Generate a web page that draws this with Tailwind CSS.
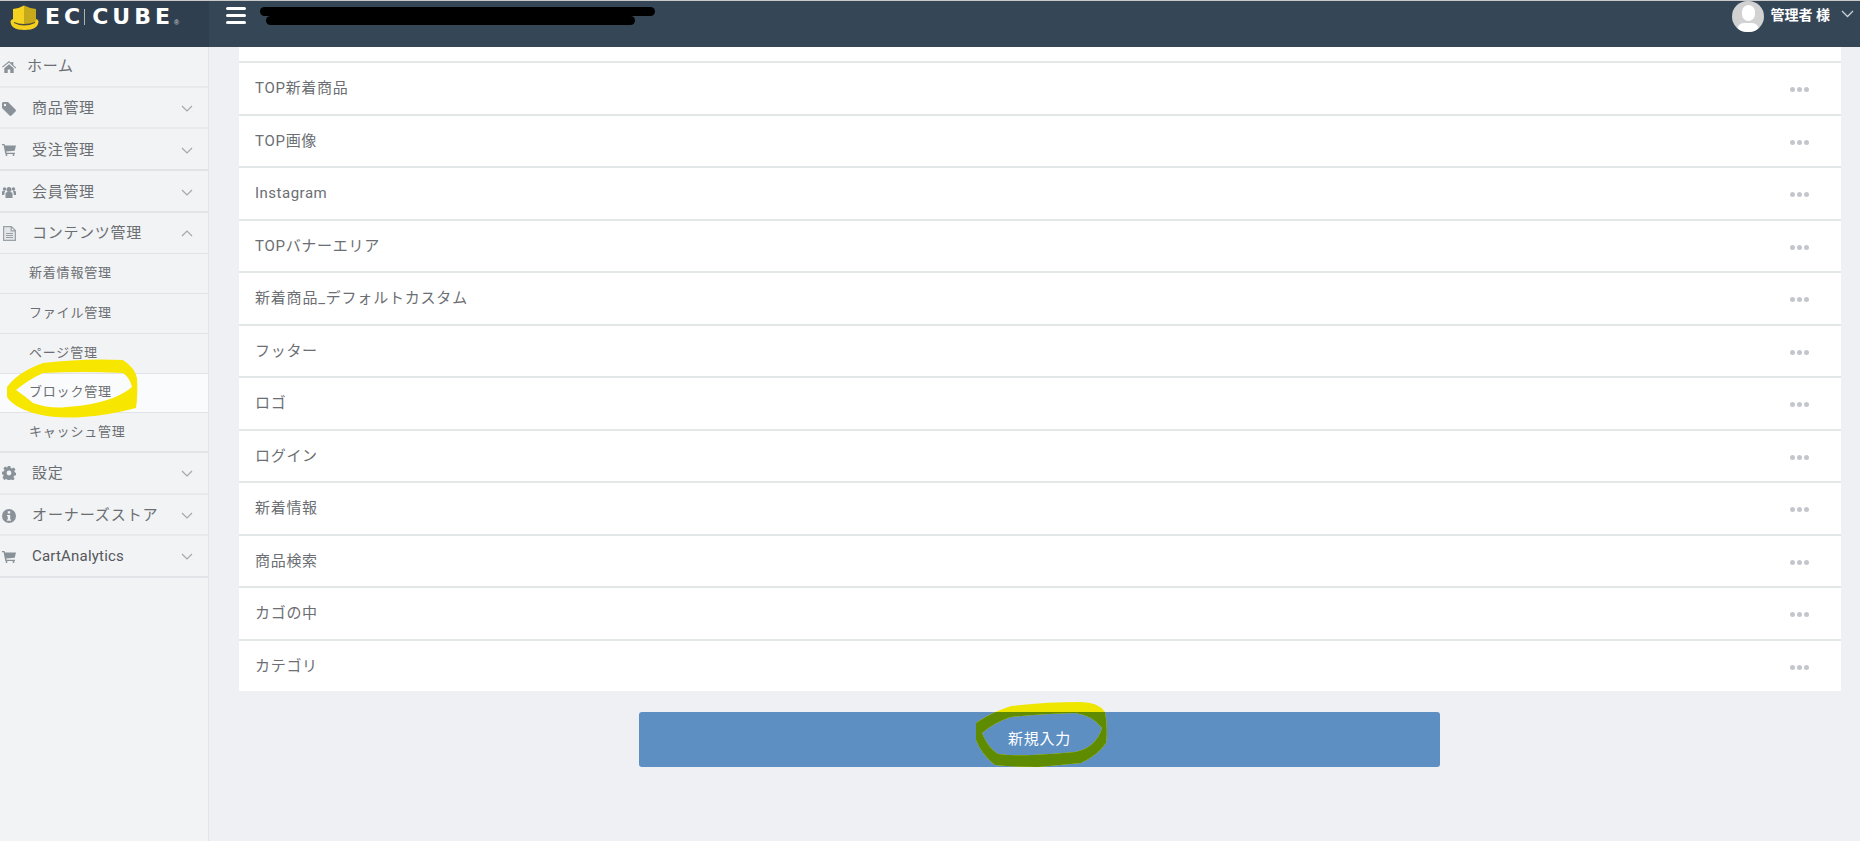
<!DOCTYPE html>
<html>

<head>
    <meta charset="UTF-8">
    <title>EC-CUBE ブロック管理</title>
    <script src="https://cdn.jsdelivr.net/npm/@tailwindcss/browser@4"></script>
</head>

<body class="relative h-[841px] w-[1860px] overflow-hidden bg-[#eef0f4] font-['Roboto','Noto_Sans_CJK_JP',sans-serif] text-[#6b6e72]">
    <!-- Header -->
    <header class="flex h-[47px] border-t border-[#c9c9c9] bg-[#354657]">
        <div class="flex w-[209px] items-start bg-[#2f3f4f] pl-[10px] pt-[3px]">
            <svg width="30" height="27" viewBox="0 0 30 27">
                <path d="M4 16Q14 21 25 16V21Q14 25 4 21Z" fill="#4e4a35" />
                <path d="M.5 17Q2 14.500 4 15V19Q14 24 25 19V15Q27.500 14.500 28.500 17Q28.500 26 14.500 26Q.5 26 .5 17Z" fill="#f4cf1d" />
                <path d="M3 5Q9 4.500 14 1.500V20Q8 20 4 18Q3 17 3 14Z" fill="#f5d21f" />
                <path d="M14 1.500Q20 4.500 26 5V14Q26 17 25 18Q20 20 14 20Z" fill="#c7aa1b" />
            </svg>
            <div class="ml-[5px] mt-[1px] flex items-center font-['DejaVu_Sans'] text-[22px] font-bold leading-[24px] tracking-[4px] text-white">
                <span>EC</span><span class="mr-[7px] h-[16px] w-px bg-white/60"></span><span>CUBE</span><span class="mt-[11px] font-['Liberation_Sans'] text-[7px] leading-none tracking-normal text-[#b8c0c8]">®</span>
            </div>
        </div>
        <div class="relative flex flex-1 items-start pl-[17px] pt-[6px]">
            <div class="flex h-[17px] w-[20px] flex-col justify-between">
                <span class="h-[3px] rounded-sm bg-white"></span>
                <span class="h-[3px] rounded-sm bg-white"></span>
                <span class="h-[3px] rounded-sm bg-white"></span>
            </div>
            <div class="ml-[14px] flex flex-col items-start">
                <span class="h-[9px] w-[395px] rounded-full bg-black"></span>
                <span class="ml-[6px] h-[9px] w-[369px] rounded-full bg-black"></span>
            </div>
            <div class="ml-auto flex items-start">
                <div class="relative -mt-[6px] h-[31px] w-[32px] overflow-hidden rounded-full bg-[#d2d2d2]">
                    <span class="absolute left-[10px] top-[4px] h-[16px] w-[13px] rounded-full bg-white"></span>
                    <span class="absolute left-[5px] top-[22px] h-[14px] w-[22px] rounded-full bg-white"></span>
                </div>
                <span class="ml-[7px] text-[14px] font-bold leading-[16px] text-white">管理者 様</span>
                <svg class="ml-[11px] mr-[6px] mt-[3px]" width="13" height="8" viewBox="0 0 13 8" fill="none" stroke="#c9d0d6" stroke-width="1.3">
                    <path d="M1 1l5.5 5.5L12 1" />
                </svg>
            </div>
        </div>
    </header>

    <div class="flex h-[794px]">
        <!-- Sidebar -->
        <nav class="w-[209px] border-r border-[#e2e4e8] bg-[#f2f3f5] text-[15px] tracking-[0.7px]">
            <a class="flex h-[41px] items-center border-b-2 border-[#e8e9eb] pl-[2px]">
                <svg class="w-[14px] fill-[#8a9299]" height="12" viewBox="0 0 14 12"><path d="M7 0l2.300 2V1h2v3l3 2.800-.8.800L7 1.600.8 6.600 0 5.800zM2.300 7.200L7 3.300l4.700 3.900V12H8.300V8.500H5.700V12H2.300z" /></svg>
                <span class="ml-[11px]">ホーム</span>
            </a>
            <a class="flex h-[41px] items-center border-b-2 border-[#e8e9eb] pl-[2px] pt-[2px]">
                <svg class="w-[14px] fill-[#8a9299]" height="14" viewBox="0 0 14 14"><path d="M0 1.500C0 .7.700 0 1.500 0H6l7.500 7.500c.6.600.6 1.400 0 2L9.500 13.500c-.6.600-1.400.6-2 0L0 6zM3 4.200a1.200 1.200 0 1 0 0-2.400 1.200 1.200 0 0 0 0 2.400z" /></svg>
                <span class="ml-[16px] flex-1">商品管理</span>
                <svg class="mr-[15px]" width="12" height="7" viewBox="0 0 12 7" fill="none" stroke="#a3a8ad" stroke-width="1.200"><path d="M1 1l5 5 5-5" /></svg>
            </a>
            <a class="flex h-[42px] items-center border-b-2 border-[#e2e3e6] pl-[2px] pt-[2px]">
                <svg class="w-[14px] fill-[#8a9299]" height="12" viewBox="0 0 14 12"><path d="M0 0h2.500l.4 1.500H14l-1.300 5.300-8.500.8.300 1.200H13v1.200H3.300L1.600 1.200H0z" /><circle cx="4.500" cy="11" r="1" /><circle cx="11.500" cy="11" r="1" /></svg>
                <span class="ml-[16px] flex-1">受注管理</span>
                <svg class="mr-[15px]" width="12" height="7" viewBox="0 0 12 7" fill="none" stroke="#a3a8ad" stroke-width="1.200"><path d="M1 1l5 5 5-5" /></svg>
            </a>
            <a class="flex h-[42px] items-center border-b-2 border-[#e2e3e6] pl-[2px] pt-[2px]">
                <svg class="w-[14px] fill-[#8a9299]" height="12" viewBox="0 0 14 12"><circle cx="7" cy="3.500" r="2.500" /><circle cx="2.500" cy="3" r="1.700" /><circle cx="11.500" cy="3" r="1.700" /><path d="M3.500 7.500c0-1 1-1.500 3.500-1.500s3.500.5 3.500 1.500V12h-7zM0 6c0-.8.800-1.200 2.500-1.200l.5.100-.7 2.600V9H0zM14 6c0-.8-.8-1.200-2.500-1.200l-.5.100.7 2.600V9H14z" /></svg>
                <span class="ml-[16px] flex-1">会員管理</span>
                <svg class="mr-[15px]" width="12" height="7" viewBox="0 0 12 7" fill="none" stroke="#a3a8ad" stroke-width="1.200"><path d="M1 1l5 5 5-5" /></svg>
            </a>
            <a class="flex h-[41px] items-center border-b border-[#e2e3e6] pl-[3px]">
                <svg class="w-[13px]" height="15" viewBox="0 0 13 15" fill="#e4e6e9" stroke="#9aa1a7" stroke-width="1.200"><path d="M.6.600h7.800l4 4v9.800H.6zM8.200.6v4.200h4.200M3 7.500h7M3 9.500h7M3 11.500h7" /></svg>
                <span class="ml-[16px] flex-1">コンテンツ管理</span>
                <svg class="mr-[15px]" width="12" height="7" viewBox="0 0 12 7" fill="none" stroke="#a3a8ad" stroke-width="1.200"><path d="M1 6l5-5 5 5" /></svg>
            </a>
            <div class="text-[13px] tracking-[0.8px]">
                <a class="flex h-[40px] items-center border-b border-[#e2e3e6] pb-[2px] pl-[29px]">新着情報管理</a>
                <a class="flex h-[40px] items-center border-b border-[#e2e3e6] pb-[2px] pl-[29px]">ファイル管理</a>
                <a class="flex h-[40px] items-center border-b border-[#e2e3e6] pb-[2px] pl-[29px]">ページ管理</a>
                <a class="flex h-[39px] items-center border-b border-[#e2e3e6] bg-[#fafbfc] pb-[2px] pl-[29px]">ブロック管理</a>
                <a class="flex h-[40px] items-center border-b-2 border-[#e2e3e6] pl-[29px]">キャッシュ管理</a>
            </div>
            <a class="flex h-[42px] items-center border-b-2 border-[#e8e9eb] pl-[2px]">
                <svg class="w-[14px] fill-[#8a9299]" height="14" viewBox="0 0 14 14"><path fill-rule="evenodd" d="M5.700 0h2.600l.4 2 1.300.6L11.800 1.500l1.700 1.900-1.200 1.600.6 1.400 1.100.3v2.600l-1.900.4-.6 1.300 1.100 1.700-1.800 1.800-1.700-1.100-1.300.5-.4 1.500H5.700l-.4-1.900-1.300-.5-1.700 1.100L.5 11.500l1.100-1.700L1 8.500 0 8.300V5.700l1.900-.4.6-1.300L1.400 2.300 3.200.5 4.900 1.600l.5-.2zM7 4.600a2.400 2.400 0 1 0 0 4.800 2.400 2.400 0 0 0 0-4.800z" /></svg>
                <span class="ml-[16px] flex-1">設定</span>
                <svg class="mr-[15px]" width="12" height="7" viewBox="0 0 12 7" fill="none" stroke="#a3a8ad" stroke-width="1.200"><path d="M1 1l5 5 5-5" /></svg>
            </a>
            <a class="flex h-[41px] items-center border-b-2 border-[#e8e9eb] pl-[2px] pt-[2px]">
                <svg class="w-[14px] fill-[#8a9299]" height="14" viewBox="0 0 14 14"><path fill-rule="evenodd" d="M7 0a7 7 0 1 1 0 14A7 7 0 0 1 7 0zM5.800 2.300v2.200h2.400V2.300zM5 6v1.200h.8v3.300H5v1.200h4v-1.200h-.8V6z" /></svg>
                <span class="ml-[16px] flex-1 tracking-[0.9px]">オーナーズストア</span>
                <svg class="mr-[15px]" width="12" height="7" viewBox="0 0 12 7" fill="none" stroke="#a3a8ad" stroke-width="1.200"><path d="M1 1l5 5 5-5" /></svg>
            </a>
            <a class="flex h-[42px] items-center border-b-2 border-[#e2e3e6] pl-[2px] pt-[1px]">
                <svg class="w-[14px] fill-[#8a9299]" height="12" viewBox="0 0 14 12"><path d="M0 0h2.500l.4 1.500H14l-1.300 5.300-8.500.8.300 1.200H13v1.200H3.300L1.600 1.200H0z" /><circle cx="4.500" cy="11" r="1" /><circle cx="11.500" cy="11" r="1" /></svg>
                <span class="ml-[16px] flex-1 tracking-[0.2px] text-[#54575b]">CartAnalytics</span>
                <svg class="mr-[15px]" width="12" height="7" viewBox="0 0 12 7" fill="none" stroke="#a3a8ad" stroke-width="1.200"><path d="M1 1l5 5 5-5" /></svg>
            </a>
        </nav>

        <!-- Block list -->
        <main class="flex-1 pl-[30px] pr-[19px]">
            <ul class="border-t-[14px] border-white bg-white text-[15px] tracking-[0.7px]">
                <li class="flex h-[52.5px] items-center justify-between border-t-2 border-[#e3e7e8] pl-[16px] pr-[32px]"><span>TOP新着商品</span><span class="mt-[3px] flex gap-[2px]"><i class="h-[5px] w-[5px] rounded-full bg-[#c3c7cd]"></i><i class="h-[5px] w-[5px] rounded-full bg-[#c3c7cd]"></i><i class="h-[5px] w-[5px] rounded-full bg-[#c3c7cd]"></i></span></li>
                <li class="flex h-[52.5px] items-center justify-between border-t-2 border-[#e3e7e8] pl-[16px] pr-[32px]"><span>TOP画像</span><span class="mt-[3px] flex gap-[2px]"><i class="h-[5px] w-[5px] rounded-full bg-[#c3c7cd]"></i><i class="h-[5px] w-[5px] rounded-full bg-[#c3c7cd]"></i><i class="h-[5px] w-[5px] rounded-full bg-[#c3c7cd]"></i></span></li>
                <li class="flex h-[52.5px] items-center justify-between border-t-2 border-[#e3e7e8] pl-[16px] pr-[32px]"><span class="tracking-[0.5px]">Instagram</span><span class="mt-[3px] flex gap-[2px]"><i class="h-[5px] w-[5px] rounded-full bg-[#c3c7cd]"></i><i class="h-[5px] w-[5px] rounded-full bg-[#c3c7cd]"></i><i class="h-[5px] w-[5px] rounded-full bg-[#c3c7cd]"></i></span></li>
                <li class="flex h-[52.5px] items-center justify-between border-t-2 border-[#e3e7e8] pl-[16px] pr-[32px]"><span>TOPバナーエリア</span><span class="mt-[3px] flex gap-[2px]"><i class="h-[5px] w-[5px] rounded-full bg-[#c3c7cd]"></i><i class="h-[5px] w-[5px] rounded-full bg-[#c3c7cd]"></i><i class="h-[5px] w-[5px] rounded-full bg-[#c3c7cd]"></i></span></li>
                <li class="flex h-[52.5px] items-center justify-between border-t-2 border-[#e3e7e8] pl-[16px] pr-[32px]"><span class="tracking-[0.8px]">新着商品_デフォルトカスタム</span><span class="mt-[3px] flex gap-[2px]"><i class="h-[5px] w-[5px] rounded-full bg-[#c3c7cd]"></i><i class="h-[5px] w-[5px] rounded-full bg-[#c3c7cd]"></i><i class="h-[5px] w-[5px] rounded-full bg-[#c3c7cd]"></i></span></li>
                <li class="flex h-[52.5px] items-center justify-between border-t-2 border-[#e3e7e8] pl-[16px] pr-[32px]"><span>フッター</span><span class="mt-[3px] flex gap-[2px]"><i class="h-[5px] w-[5px] rounded-full bg-[#c3c7cd]"></i><i class="h-[5px] w-[5px] rounded-full bg-[#c3c7cd]"></i><i class="h-[5px] w-[5px] rounded-full bg-[#c3c7cd]"></i></span></li>
                <li class="flex h-[52.5px] items-center justify-between border-t-2 border-[#e3e7e8] pl-[16px] pr-[32px]"><span>ロゴ</span><span class="mt-[3px] flex gap-[2px]"><i class="h-[5px] w-[5px] rounded-full bg-[#c3c7cd]"></i><i class="h-[5px] w-[5px] rounded-full bg-[#c3c7cd]"></i><i class="h-[5px] w-[5px] rounded-full bg-[#c3c7cd]"></i></span></li>
                <li class="flex h-[52.5px] items-center justify-between border-t-2 border-[#e3e7e8] pl-[16px] pr-[32px]"><span>ログイン</span><span class="mt-[3px] flex gap-[2px]"><i class="h-[5px] w-[5px] rounded-full bg-[#c3c7cd]"></i><i class="h-[5px] w-[5px] rounded-full bg-[#c3c7cd]"></i><i class="h-[5px] w-[5px] rounded-full bg-[#c3c7cd]"></i></span></li>
                <li class="flex h-[52.5px] items-center justify-between border-t-2 border-[#e3e7e8] pl-[16px] pr-[32px]"><span>新着情報</span><span class="mt-[3px] flex gap-[2px]"><i class="h-[5px] w-[5px] rounded-full bg-[#c3c7cd]"></i><i class="h-[5px] w-[5px] rounded-full bg-[#c3c7cd]"></i><i class="h-[5px] w-[5px] rounded-full bg-[#c3c7cd]"></i></span></li>
                <li class="flex h-[52.5px] items-center justify-between border-t-2 border-[#e3e7e8] pl-[16px] pr-[32px]"><span>商品検索</span><span class="mt-[3px] flex gap-[2px]"><i class="h-[5px] w-[5px] rounded-full bg-[#c3c7cd]"></i><i class="h-[5px] w-[5px] rounded-full bg-[#c3c7cd]"></i><i class="h-[5px] w-[5px] rounded-full bg-[#c3c7cd]"></i></span></li>
                <li class="flex h-[52.5px] items-center justify-between border-t-2 border-[#e3e7e8] pl-[16px] pr-[32px]"><span>カゴの中</span><span class="mt-[3px] flex gap-[2px]"><i class="h-[5px] w-[5px] rounded-full bg-[#c3c7cd]"></i><i class="h-[5px] w-[5px] rounded-full bg-[#c3c7cd]"></i><i class="h-[5px] w-[5px] rounded-full bg-[#c3c7cd]"></i></span></li>
                <li class="flex h-[52.5px] items-center justify-between border-t-2 border-[#e3e7e8] pl-[16px] pr-[32px]"><span>カテゴリ</span><span class="mt-[3px] flex gap-[2px]"><i class="h-[5px] w-[5px] rounded-full bg-[#c3c7cd]"></i><i class="h-[5px] w-[5px] rounded-full bg-[#c3c7cd]"></i><i class="h-[5px] w-[5px] rounded-full bg-[#c3c7cd]"></i></span></li>
            </ul>
            <div class="mt-[21px] flex justify-center">
                <button class="-ml-[1px] h-[55px] w-[801px] rounded-[3px] bg-[#5d8fc3] text-[15px] tracking-[0.7px] text-white">新規入力</button>
            </div>
        </main>
    </div>

    <!-- Hand-drawn marks over the screenshot -->
    <svg class="pointer-events-none absolute left-0 top-0" width="1860" height="841" viewBox="0 0 1860 841">
        <defs>
            <clipPath id="onButton"><rect x="639" y="712" width="802" height="55" /></clipPath>
        </defs>
        <path fill="#f7e600" fill-rule="evenodd" d="M7 387Q18 372 43 363Q85 358 123 360Q135 368 137 378Q138 395 136 408Q110 415 83 417Q55 419 33 413Q12 406 7 397ZM16 390Q25 396 33 403Q50 409 67 407Q95 405 113 398Q125 393 132 387Q130 378 123 373Q85 371 43 373Q28 380 16 390Z" />
        <path fill="#efe600" fill-rule="evenodd" d="M976 723Q990 713 1011 706Q1045 702 1081 702Q1098 702 1105 712Q1108 728 1106 743Q1098 755 1081 763Q1060 765 1038 767Q1015 767 995 765Q982 755 976 740ZM982 733Q988 748 998 754Q1015 756 1032 755Q1055 754 1075 752Q1085 750 1091 745Q1100 737 1102 728Q1092 715 1075 713Q1040 714 1011 717Q995 722 982 733Z" />
        <path clip-path="url(#onButton)" fill="#5f8b00" fill-rule="evenodd" d="M976 723Q990 713 1011 706Q1045 702 1081 702Q1098 702 1105 712Q1108 728 1106 743Q1098 755 1081 763Q1060 765 1038 767Q1015 767 995 765Q982 755 976 740ZM982 733Q988 748 998 754Q1015 756 1032 755Q1055 754 1075 752Q1085 750 1091 745Q1100 737 1102 728Q1092 715 1075 713Q1040 714 1011 717Q995 722 982 733Z" />
    </svg>
</body>

</html>
